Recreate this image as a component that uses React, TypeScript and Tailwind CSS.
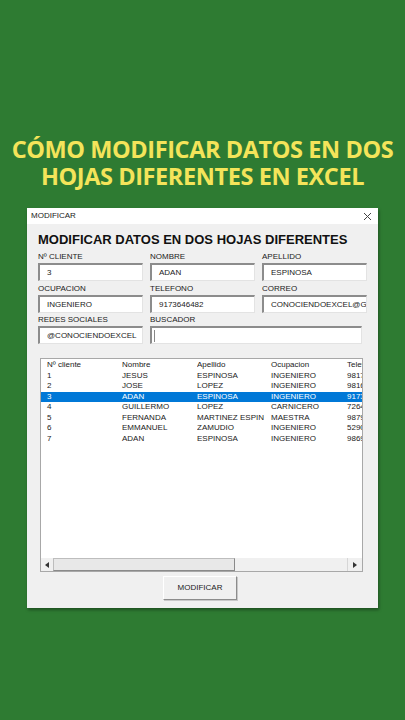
import React from 'react'

const ROWS = [
  ['1', 'JESUS', 'ESPINOSA', 'INGENIERO', '9817263541'],
  ['2', 'JOSE', 'LOPEZ', 'INGENIERO', '9816354721'],
  ['3', 'ADAN', 'ESPINOSA', 'INGENIERO', '9173646482'],
  ['4', 'GUILLERMO', 'LOPEZ', 'CARNICERO', '7264518390'],
  ['5', 'FERNANDA', 'MARTINEZ ESPINOSA', 'MAESTRA', '9879012345'],
  ['6', 'EMMANUEL', 'ZAMUDIO', 'INGENIERO', '5290817364'],
  ['7', 'ADAN', 'ESPINOSA', 'INGENIERO', '9869123457'],
]

const font = { fontFamily: '"Liberation Sans", Arial, sans-serif' }

function Field({ label, value, wide }: { label: string; value: string; wide?: boolean }) {
  return (
    <div className={wide ? 'w-[212px]' : 'w-[105px]'}>
      <div className="h-[14px] text-[8px] leading-[14px] text-[#222] pt-[1px] whitespace-nowrap">{label}</div>
      <div className="h-[18px] bg-white border-t-2 border-l-2 border-t-[#8c8c8c] border-l-[#8c8c8c] border-b border-r border-b-[#e3e3e3] border-r-[#e3e3e3] overflow-hidden flex items-center pl-[7px] text-[8px] text-[#222] whitespace-nowrap">
        {value}
        {wide && <span className="inline-block w-px h-[12px] bg-[#888] -ml-[5px]" />}
      </div>
    </div>
  )
}

function Row({ cells, selected }: { cells: string[]; selected?: boolean }) {
  return (
    <div className={`flex h-[10.5px] leading-[10.5px] text-[8px] whitespace-nowrap ${selected ? 'bg-[#0078d7] text-white' : 'text-[#222]'}`}>
      <div className="w-[81px] shrink-0 pl-[6px]">{cells[0]}</div>
      <div className="w-[75px] shrink-0">{cells[1]}</div>
      <div className="w-[74px] shrink-0">
        <div className="w-[67px] overflow-hidden">{cells[2]}</div>
      </div>
      <div className="w-[76px] shrink-0">{cells[3]}</div>
      <div className="w-[60px] shrink-0">{cells[4]}</div>
    </div>
  )
}

export default function App() {
  return (
    <div className="w-[405px] h-[720px] bg-[#2e7b32] overflow-hidden">
      <div
        className="pt-[136px] text-center text-[#f4e45a] font-bold text-[23.5px] leading-[27px] tracking-[-0.4px]"
        style={{ fontFamily: '"Open Sans", sans-serif' }}
      >
        <div className="whitespace-nowrap">CÓMO MODIFICAR DATOS EN DOS</div>
        <div className="whitespace-nowrap">HOJAS DIFERENTES EN EXCEL</div>
      </div>

      <div className="mt-[18px] ml-[27px] w-[351px] bg-[#f0f0f0] shadow-[1px_2px_3px_rgba(0,0,0,0.35)]" style={font}>
        <div className="h-[16px] bg-white flex items-center justify-between pl-[4px] pr-[6px] text-[8px] text-[#222]">
          <span>MODIFICAR</span>
          <svg width="9" height="9" viewBox="0 0 9 9">
            <path d="M1 1 L8 8 M8 1 L1 8" stroke="#444" strokeWidth="1" />
          </svg>
        </div>

        <div className="px-[11px]">
          <div className="h-[25px] pt-[9px] text-[13px] leading-[14px] font-bold text-[#111] whitespace-nowrap">
            MODIFICAR DATOS EN DOS HOJAS DIFERENTES
          </div>

          <div className="flex gap-[7px]">
            <Field label="Nº CLIENTE" value="3" />
            <Field label="NOMBRE" value="ADAN" />
            <Field label="APELLIDO" value="ESPINOSA" />
          </div>
          <div className="flex gap-[7px]">
            <Field label="OCUPACION" value="INGENIERO" />
            <Field label="TELEFONO" value="9173646482" />
            <Field label="CORREO" value="CONOCIENDOEXCEL@GMAIL.COM" />
          </div>
          <div className="flex gap-[7px] -mt-[1px]">
            <Field label="REDES SOCIALES" value="@CONOCIENDOEXCEL" />
            <Field label="BUSCADOR" value="" wide />
          </div>
        </div>

        <div className="mt-[14px] ml-[13px] w-[323px] h-[214px] bg-white border border-[#a8a8a8] flex flex-col">
          <div className="flex-1 overflow-hidden pt-[1px]">
            <Row cells={['Nº cliente', 'Nombre', 'Apellido', 'Ocupacion', 'Telefono']} />
            {ROWS.map((r) => (
              <Row key={r[0]} cells={r} selected={r[0] === '3'} />
            ))}
          </div>
          <div className="h-[13px] flex bg-[#f0f0f0]">
            <div className="w-[12px] flex items-center justify-center">
              <svg width="4" height="6" viewBox="0 0 4 6"><path d="M4 0 L0 3 L4 6 Z" fill="#333" /></svg>
            </div>
            <div className="w-[182px] bg-[#e8e8e8] border border-[#bdbdbd] border-r-[#8a8a8a] border-b-[#8a8a8a]" />
            <div className="flex-1" />
            <div className="w-[15px] flex items-center justify-center border-l border-[#d6d6d6]">
              <svg width="4" height="6" viewBox="0 0 4 6"><path d="M0 0 L4 3 L0 6 Z" fill="#333" /></svg>
            </div>
          </div>
        </div>

        <div className="flex justify-center pt-[4px] pb-[8px] pr-[5px]">
          <div className="w-[74px] h-[24px] bg-[#f0f0f0] border border-t-white border-l-white border-r-[#8c8c8c] border-b-[#8c8c8c] shadow-[1px_1px_0_#c8c8c8] flex items-center justify-center text-[8px] text-[#222]">
            MODIFICAR
          </div>
        </div>
      </div>
    </div>
  )
}
